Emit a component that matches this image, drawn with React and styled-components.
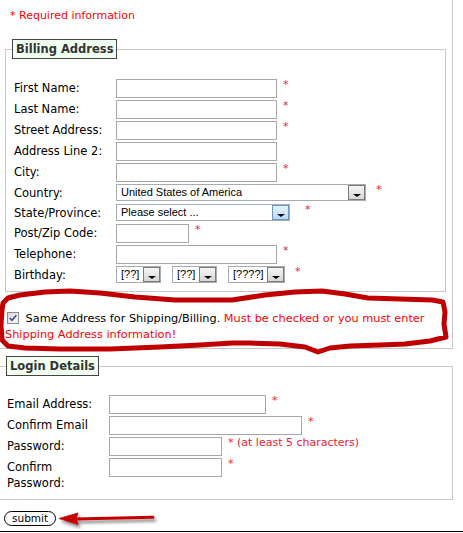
import styled, { createGlobalStyle } from 'styled-components';

const billingFields = [
  { label: 'First Name:', width: 161, required: true },
  { label: 'Last Name:', width: 161, required: true },
  { label: 'Street Address:', width: 161, required: true },
  { label: 'Address Line 2:', width: 161 },
  { label: 'City:', width: 161, required: true },
];

const loginFields = [
  { label: 'Email Address:', width: 157 },
  { label: 'Confirm Email', width: 193 },
];

const Combo = ({ width, text, active }) => (
  <Select $w={width}>
    <SelectText>{text}</SelectText>
    <DropButton $active={active} />
  </Select>
);

const Check = () => (
  <CheckBox>
    <svg width='10' height='10' viewBox='0 0 10 10'>
      <path d='M1.8 5 L4 7.3 L8.3 2.3' fill='none' stroke='#3d4fb5' strokeWidth='1.7' />
    </svg>
  </CheckBox>
);

const App = () => {
  return (
    <>
      <GlobalStyle />
      <Page>
        <TopBox>
          <Required>* Required information</Required>
          <Fieldset>
            <Legend>Billing Address</Legend>
            {billingFields.map(f => (
              <Row key={f.label}>
                <Label>{f.label}</Label>
                <TextInput $w={f.width} />
                {f.required && <Star>*</Star>}
              </Row>
            ))}
            <Row $h={20}>
              <Label>Country:</Label>
              <Combo width={250} text='United States of America' />
              <Star $gap={10}>*</Star>
            </Row>
            <Row $h={20}>
              <Label>State/Province:</Label>
              <Combo width={174} text='Please select ...' active />
              <Star $gap={15}>*</Star>
            </Row>
            <Row>
              <Label>Post/Zip Code:</Label>
              <TextInput $w={73} />
              <Star>*</Star>
            </Row>
            <Row>
              <Label>Telephone:</Label>
              <TextInput $w={161} />
              <Star>*</Star>
            </Row>
            <Row $h={20}>
              <Label>Birthday:</Label>
              <DateGroup>
                <Combo width={45} text='[??]' />
                <Combo width={45} text='[??]' />
                <Combo width={57} text='[????]' />
              </DateGroup>
              <Star $gap={10}>*</Star>
            </Row>
          </Fieldset>
          <CheckPara>
            <Check /> Same Address for Shipping/Billing.{' '}
            <Warn>Must be checked or you must enter Shipping Address information!</Warn>
          </CheckPara>
        </TopBox>

        <LoginFieldset>
          <Legend $shift={-1}>Login Details</Legend>
          {loginFields.map(f => (
            <Row key={f.label}>
              <Label>{f.label}</Label>
              <TextInput $w={f.width} />
              <Star>*</Star>
            </Row>
          ))}
          <Row>
            <Label>Password:</Label>
            <TextInput $w={113} />
            <Star>* (at least 5 characters)</Star>
          </Row>
          <Row $h={34}>
            <Label>Confirm Password:</Label>
            <TextInput $w={113} />
            <Star>*</Star>
          </Row>
        </LoginFieldset>

        <SubmitRow>
          <SubmitButton type='button'>submit</SubmitButton>
          <svg width='100' height='22' viewBox='0 0 100 22'>
            <defs>
              <filter id='arrowShadow' x='-10%' y='-50%' width='130%' height='250%'>
                <feDropShadow dx='2' dy='3' stdDeviation='1.4' floodColor='#000' floodOpacity='0.45' />
              </filter>
            </defs>
            <g filter='url(#arrowShadow)' fill='#c40000' stroke='#c40000'>
              <path d='M0 10.5 L19 5 L17 10.5 L19 16.5 Z' strokeWidth='0.8' strokeLinejoin='round' />
              <path d='M16 11 L94 9.2' strokeWidth='3' fill='none' strokeLinecap='round' />
            </g>
          </svg>
        </SubmitRow>
        <Footer />

        <Loop width='453' height='72' viewBox='0 0 453 72'>
          <path
            d='M3 17 L8 12 L20 9 L45 6 L70 5 L100 7 L135 11 L175 14 L232 14 L265 9 L295 6 L322 5 L345 8 L368 12 L400 13 L432 14 L443 16 L445 26 L444 38 L446 51 L430 55 L405 58 L380 59 L350 60 L330 62 L318 66 L305 61 L280 58 L250 57 L232 57 L200 59 L160 61 L110 63 L60 63 L25 62 L8 60 L2 54 L1 39 L2 24 Z'
            fill='none'
            stroke='#c00000'
            strokeWidth='5'
            strokeLinejoin='round'
          />
        </Loop>
      </Page>
    </>
  );
};

const GlobalStyle = createGlobalStyle`
  html, body {
    margin: 0;
    padding: 0;
    background: #fff;
  }
  body {
    font-family: "DejaVu Sans", Verdana, sans-serif;
    color: #000;
  }
`;

const Page = styled.div`
  position: relative;
  width: 463px;
`;

const TopBox = styled.div`
  width: 452px;
  border-right: 1px solid #c8c8c8;
  border-bottom: 1px solid #c8c8c8;
  padding: 9px 0 5px;
`;

const Required = styled.p`
  margin: 0;
  padding-left: 10px;
  font-size: 11px;
  line-height: 14px;
  color: #f00;
`;

const Fieldset = styled.fieldset`
  box-sizing: border-box;
  width: 441px;
  margin: 16px 0 0 5px;
  padding: 19px 8px 6px 8px;
  border: 1px solid #c8c8c8;
  min-inline-size: 0;
`;

const LoginFieldset = styled(Fieldset)`
  width: 453px;
  margin: 7px 0 0 0;
  padding: 18px 8px 8px 7px;
  border-left: none;
`;

const Legend = styled.legend`
  margin-left: ${p => p.$shift ?? -2}px;
  padding: 1px 3px;
  border: 1px solid #444;
  background: #f0fff0;
  color: #333;
  font-size: 11.5px;
  font-weight: bold;
  line-height: 16px;
`;

const Row = styled.div`
  display: flex;
  align-items: flex-start;
  height: ${p => p.$h ?? 21}px;
`;

const Label = styled.div`
  flex-shrink: 0;
  width: 102px;
  padding-top: 2px;
  font-size: 11.5px;
  line-height: 16px;
`;

const TextInput = styled.input`
  box-sizing: border-box;
  width: ${p => p.$w}px;
  height: 19px;
  margin: 1px 0 0;
  padding: 0 2px;
  border: 1px solid #a8a8a8;
  background: #fff;
  outline: none;
`;

const Star = styled.span`
  margin-left: ${p => p.$gap ?? 6}px;
  color: #f02030;
  font-size: 11px;
  line-height: 14px;
  white-space: nowrap;
`;

const DateGroup = styled.div`
  display: flex;
  gap: 11px;
`;

const Select = styled.div`
  box-sizing: border-box;
  display: flex;
  width: ${p => p.$w}px;
  height: 17px;
  margin-top: 1px;
  border: 1px solid #a5acb2;
  background: #fff;
  font-family: "Liberation Sans", Arial, sans-serif;
  font-size: 11px;
`;

const SelectText = styled.span`
  flex: 1;
  overflow: hidden;
  padding-left: 4px;
  line-height: 15px;
  white-space: nowrap;
`;

const DropButton = styled.span`
  box-sizing: border-box;
  display: flex;
  justify-content: center;
  align-items: flex-start;
  width: 17px;
  height: 15px;
  padding-top: 8px;
  border: 1px solid ${p => (p.$active ? '#6e95c2' : '#7c7c7c')};
  background: ${p =>
    p.$active
      ? 'linear-gradient(#e6f2fd, #b9d8f6)'
      : 'linear-gradient(#f6f6f6, #d6d6d6)'};

  &::after {
    content: '';
    border-left: 4px solid transparent;
    border-right: 4px solid transparent;
    border-top: 3px solid #000;
  }
`;

const CheckPara = styled.p`
  margin: 19px 0 0;
  padding-left: 5px;
  font-size: 11.3px;
  line-height: 16px;
`;

const CheckBox = styled.span`
  box-sizing: border-box;
  display: inline-flex;
  justify-content: center;
  align-items: center;
  width: 12px;
  height: 12px;
  margin: 0 3px 0 2px;
  border: 1px solid #8c8c8c;
  background: linear-gradient(135deg, #d8d8d4, #fbfbfb);
  vertical-align: -1px;
`;

const Warn = styled.span`
  color: #f00;
`;

const SubmitRow = styled.div`
  display: flex;
  align-items: flex-start;
  gap: 3px;
  margin-top: 11px;
  padding-left: 4px;

  svg {
    margin-top: -3px;
  }
`;

const SubmitButton = styled.button`
  box-sizing: border-box;
  height: 15px;
  padding: 0 7px;
  border: 1px solid #000;
  border-radius: 8px;
  background: #fff;
  color: #000;
  font-family: "DejaVu Sans", Verdana, sans-serif;
  font-size: 10.5px;
  line-height: 13px;
`;

const Footer = styled.div`
  margin-top: 1px;
  border-top: 1px solid #000;
`;

const Loop = styled.svg`
  position: absolute;
  top: 286px;
  left: 0;
  pointer-events: none;
`;

export default App;
